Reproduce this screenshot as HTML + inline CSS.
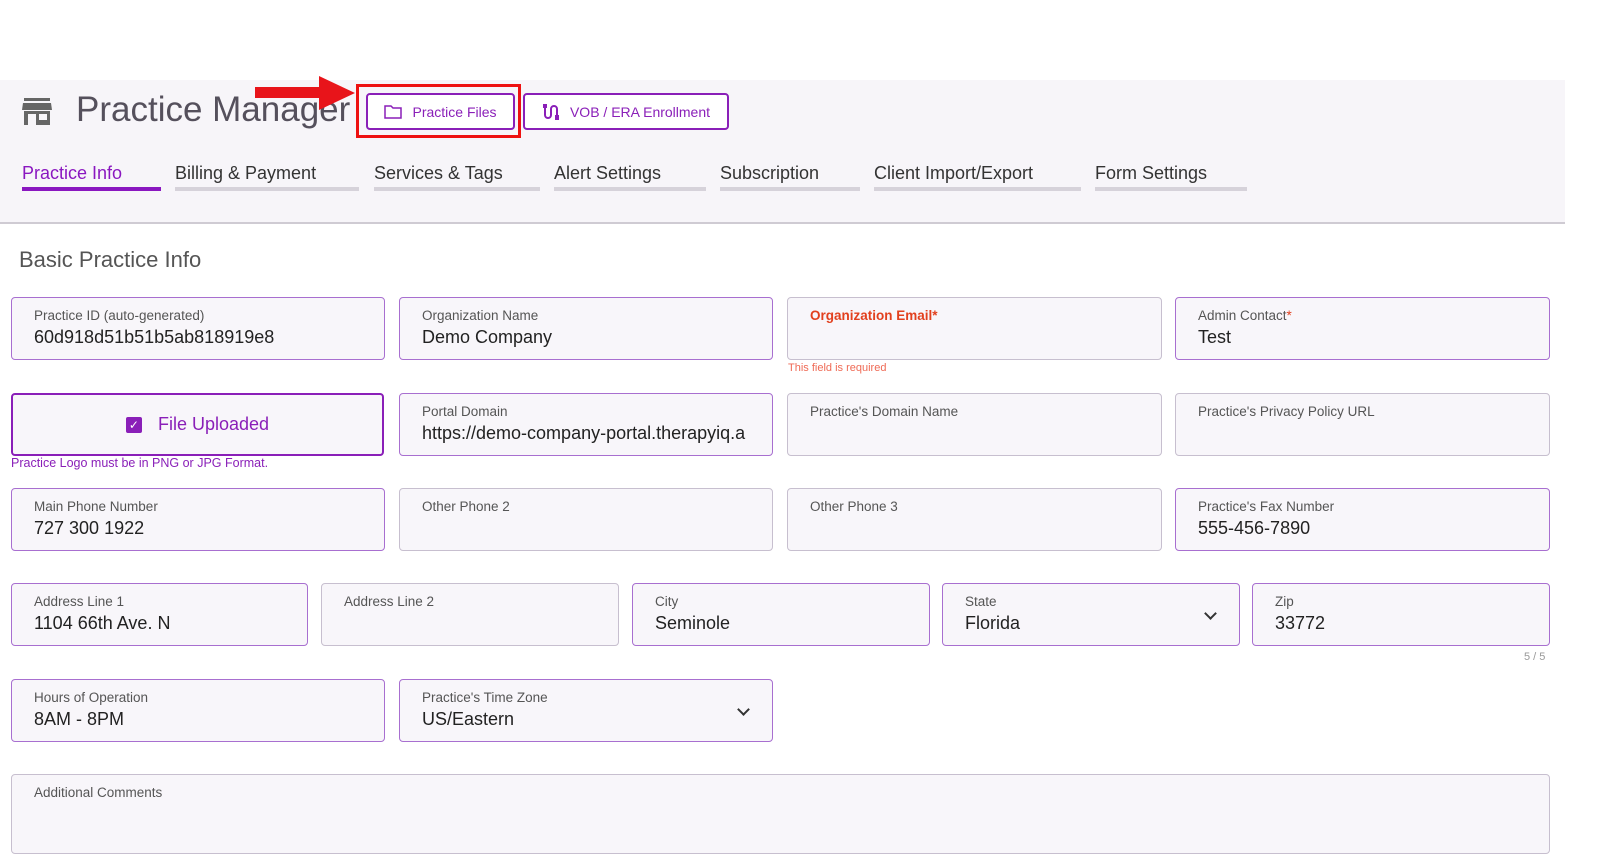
<!DOCTYPE html>
<html><head><meta charset="utf-8"><style>
*{box-sizing:border-box;margin:0;padding:0}
body{width:1600px;height:831px;background:#fff;font-family:"Liberation Sans",sans-serif;position:relative;overflow:hidden;color:#222}
.hdr{position:absolute;left:0;top:80px;width:1565px;height:144px;background:#f7f5f9;border-bottom:2px solid #cfcbd3}
.title{position:absolute;left:76px;top:90px;font-size:35px;color:#55505c}
.btn{position:absolute;top:93px;height:37px;border:2px solid #8a1fb8;border-radius:4px;background:#fff;color:#8a1fb8;font-size:14px;display:flex;align-items:center;justify-content:center;gap:10px}
.tab{position:absolute;top:163px;font-size:18px;color:#333;border-bottom:4px solid #d6d2da;height:28px;white-space:nowrap}
.tab.on{color:#8a17c0;border-color:#8a17c0}
.sec{position:absolute;left:19px;top:247px;font-size:22px;color:#555}
.f{position:absolute;height:63px;background:#f8f6fa;border:1.5px solid #a86fd0;border-radius:4px}
.f.e{border-color:#c7bfcf}
.f .l{position:absolute;left:22px;top:10px;font-size:13.5px;color:#555}
.f .v{position:absolute;left:22px;top:29px;font-size:18px;color:#222}
.chev{position:absolute;right:24px;top:25px;width:9px;height:9px;border-right:2px solid #333;border-bottom:2px solid #333;transform:rotate(45deg)}
</style></head><body>
<div class="hdr"></div>
<svg style="position:absolute;left:22px;top:98px" width="30" height="27" viewBox="0 0 30 27"><rect x="2" y="0" width="26" height="3" fill="#666"/><path d="M1 5h28l1 7H0z" fill="#666"/><rect x="2" y="13" width="26" height="14" fill="#666"/><rect x="6" y="16" width="8" height="11" fill="#f7f5f9"/><rect x="17" y="16" width="8" height="6" fill="#f7f5f9"/></svg>
<div class="title">Practice Manager</div>
<svg style="position:absolute;left:255px;top:76px" width="102" height="34"><rect x="0" y="11" width="68" height="11" fill="#e8141a"/><path d="M64 0L100 17L64 34z" fill="#e8141a"/></svg>
<div style="position:absolute;left:356px;top:84px;width:165px;height:54px;border:3px solid #ee1111"></div>
<div class="btn" style="left:366px;width:149px"><svg width="18" height="14" viewBox="0 0 18 14"><path d="M1 1h6l2 2h8v10H1z" fill="none" stroke="#8a1fb8" stroke-width="1.5"/></svg>Practice Files</div>
<div class="btn" style="left:523px;width:206px"><svg width="18" height="18" viewBox="0 0 18 18"><path d="M3 2v10a3 3 0 0 0 6 0V6a3 3 0 0 1 6 0v10" fill="none" stroke="#8a1fb8" stroke-width="2"/><rect x="1" y="1" width="4" height="4" fill="#8a1fb8"/><rect x="13" y="12" width="4" height="5" fill="#8a1fb8"/></svg>VOB / ERA Enrollment</div>
<div class="tab on" style="left:22px;width:139px">Practice Info</div>
<div class="tab" style="left:175px;width:184px">Billing &amp; Payment</div>
<div class="tab" style="left:374px;width:166px">Services &amp; Tags</div>
<div class="tab" style="left:554px;width:152px">Alert Settings</div>
<div class="tab" style="left:720px;width:140px">Subscription</div>
<div class="tab" style="left:874px;width:207px">Client Import/Export</div>
<div class="tab" style="left:1095px;width:152px">Form Settings</div>
<div class="sec">Basic Practice Info</div>

<div class="f" style="left:11px;top:297px;width:374px"><div class="l">Practice ID (auto-generated)</div><div class="v">60d918d51b51b5ab818919e8</div></div>
<div class="f" style="left:399px;top:297px;width:374px"><div class="l">Organization Name</div><div class="v">Demo Company</div></div>
<div class="f e" style="left:787px;top:297px;width:375px"><div class="l" style="color:#e2401e;font-weight:bold">Organization Email*</div></div>
<div style="position:absolute;left:788px;top:362px;font-size:11px;color:#ef6a55">This field is required</div>
<div class="f" style="left:1175px;top:297px;width:375px"><div class="l">Admin Contact<span style="color:#e2401e">*</span></div><div class="v">Test</div></div>

<div class="f" style="left:11px;top:393px;width:373px;border:2px solid #8a1fb8;display:flex;align-items:center;justify-content:center;gap:16px;color:#8a1fb8;font-size:18px"><span style="width:16px;height:16px;background:#8a1fb8;border-radius:2px;color:#fff;font-size:12px;line-height:16px;text-align:center">✓</span>File Uploaded</div>
<div style="position:absolute;left:11px;top:456px;font-size:12.5px;color:#8a1fb8">Practice Logo must be in PNG or JPG Format.</div>
<div class="f" style="left:399px;top:393px;width:374px;overflow:hidden"><div class="l">Portal Domain</div><div class="v" style="white-space:nowrap">https://demo-company-portal.therapyiq.a</div></div>
<div class="f e" style="left:787px;top:393px;width:375px"><div class="l">Practice's Domain Name</div></div>
<div class="f e" style="left:1175px;top:393px;width:375px"><div class="l">Practice's Privacy Policy URL</div></div>

<div class="f" style="left:11px;top:488px;width:374px"><div class="l">Main Phone Number</div><div class="v">727 300 1922</div></div>
<div class="f e" style="left:399px;top:488px;width:374px"><div class="l">Other Phone 2</div></div>
<div class="f e" style="left:787px;top:488px;width:375px"><div class="l">Other Phone 3</div></div>
<div class="f" style="left:1175px;top:488px;width:375px"><div class="l">Practice's Fax Number</div><div class="v">555-456-7890</div></div>

<div class="f" style="left:11px;top:583px;width:297px"><div class="l">Address Line 1</div><div class="v">1104 66th Ave. N</div></div>
<div class="f e" style="left:321px;top:583px;width:298px"><div class="l">Address Line 2</div></div>
<div class="f" style="left:632px;top:583px;width:298px"><div class="l">City</div><div class="v">Seminole</div></div>
<div class="f" style="left:942px;top:583px;width:298px"><div class="l">State</div><div class="v">Florida</div><div class="chev"></div></div>
<div class="f" style="left:1252px;top:583px;width:298px"><div class="l">Zip</div><div class="v">33772</div></div>
<div style="position:absolute;left:1524px;top:651px;font-size:11px;color:#999">5 / 5</div>

<div class="f" style="left:11px;top:679px;width:374px"><div class="l">Hours of Operation</div><div class="v">8AM - 8PM</div></div>
<div class="f" style="left:399px;top:679px;width:374px"><div class="l">Practice's Time Zone</div><div class="v">US/Eastern</div><div class="chev"></div></div>

<div class="f e" style="left:11px;top:774px;width:1539px;height:80px"><div class="l">Additional Comments</div></div>
</body></html>
